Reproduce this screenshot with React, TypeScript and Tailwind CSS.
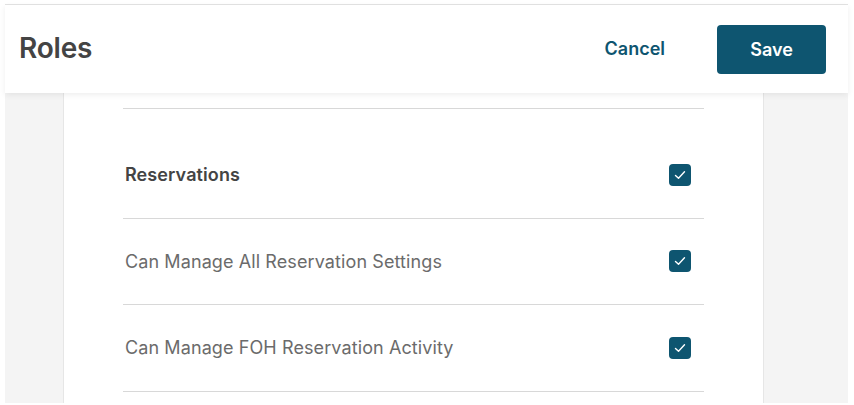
import React from "react";

const rows = [
  { label: "Reservations", header: true },
  { label: "Can Manage All Reservation Settings", header: false },
  { label: "Can Manage FOH Reservation Activity", header: false },
];

const CheckBox = () => (
  <div className="w-[22px] h-[22px] rounded-[4px] bg-[#0e5570] flex items-center justify-center">
    <svg width="14" height="14" viewBox="0 0 14 14" fill="none">
      <path d="M2.5 7.5 L5.5 10.3 L11.5 3.8" stroke="white" strokeWidth="1.4" strokeLinecap="round" strokeLinejoin="round" />
    </svg>
  </div>
);

export default function App() {
  return (
    <div className="w-[854px] h-[405px] bg-white pt-[4px] pl-[5px] pr-[6px] pb-[2px] overflow-hidden" style={{ fontFamily: "Inter, 'Liberation Sans', sans-serif" }}>
      <div className="relative h-full border-t border-[#e3e3e3] bg-[#f4f4f4] flex flex-col">
        <div className="relative z-10 h-[88px] shrink-0 bg-white shadow-[0_2px_6px_rgba(0,0,0,0.07)] flex items-center pl-[14px] pr-[22px]">
          <h1 className="text-[28px] font-semibold text-[#444] tracking-[-0.2px] mt-[-2px]">Roles</h1>
          <div className="ml-auto flex items-center gap-[52px]">
            <button className="text-[18px] font-semibold text-[#0e5570] mt-[-1px]">Cancel</button>
            <button className="w-[109px] h-[49px] rounded-[4px] bg-[#0e5570] text-white text-[18px] font-semibold">Save</button>
          </div>
        </div>
        <div className="flex-1 ml-[58px] w-[701px] bg-white border-x border-[#e6e6e6] px-[59px] pt-[15px]">
          <div className="border-t border-[#d8d8d8]">
            {rows.map((r) => (
              <div key={r.label} className={`flex items-center justify-between border-b border-[#d8d8d8] h-[86.6px] pl-[2px] pr-[13px] ${r.header ? "mt-[23px]" : ""}`}>
                <span className={r.header ? "text-[18px] font-semibold text-[#444] tracking-[0.1px]" : "text-[18px] text-[#6b6b6b] tracking-[0.1px]"}>{r.label}</span>
                <CheckBox />
              </div>
            ))}
          </div>
        </div>
      </div>
    </div>
  );
}
